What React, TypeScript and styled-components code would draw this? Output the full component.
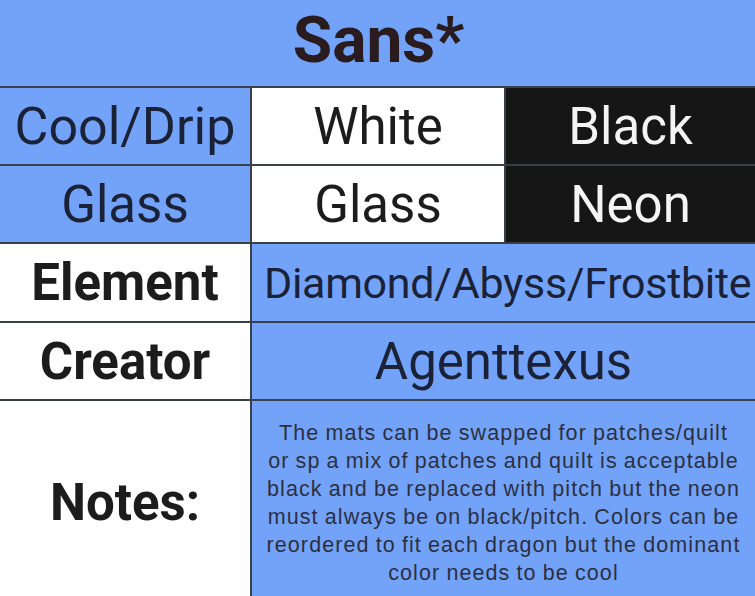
import React from 'react';
import styled, { createGlobalStyle } from 'styled-components';

const GlobalStyle = createGlobalStyle`
  html, body {
    margin: 0;
    padding: 0;
    background: #72a3f8;
  }
  body {
    font-family: Roboto, "Liberation Sans", Arial, sans-serif;
  }
`;

const BLUE = '#72a3f8';
const LINE = '#3b3f4a';

const Sheet = styled.div`
  width: 755px;
  height: 596px;
  display: flex;
  flex-direction: column;
  background: ${BLUE};
  overflow: hidden;
`;

const Title = styled.div`
  height: 80px;
  flex-shrink: 0;
  display: flex;
  align-items: center;
  justify-content: center;
  padding: 0 0 6px 2px;
  font-size: 64px;
  font-weight: 700;
  color: #2a1b1e;
  border-bottom: 2px solid ${LINE};
`;

const Row = styled.div<{ $cols: string; $height: number }>`
  display: grid;
  grid-template-columns: ${p => p.$cols};
  height: ${p => p.$height}px;
  border-bottom: 2px solid ${LINE};
  flex-shrink: 0;

  &:last-child {
    border-bottom: none;
    flex: 1;
  }
`;

type Tone = 'blue' | 'white' | 'black';

const toneBg: Record<Tone, string> = {
  blue: BLUE,
  white: '#ffffff',
  black: '#161616',
};

const toneFg: Record<Tone, string> = {
  blue: '#1b2136',
  white: '#1c1c1c',
  black: '#f4f4f4',
};

const Cell = styled.div<{ $tone: Tone; $bold?: boolean; $size?: number }>`
  display: flex;
  align-items: center;
  justify-content: center;
  background: ${p => toneBg[p.$tone]};
  color: ${p => toneFg[p.$tone]};
  font-size: ${p => p.$size ?? 51}px;
  font-weight: ${p => (p.$bold ? 700 : 400)};
  border-right: 2px solid ${LINE};
  white-space: nowrap;
  overflow: hidden;

  &:last-child {
    border-right: none;
  }
`;

const WideCell = styled(Cell)`
  justify-content: flex-start;
  padding-left: 12px;
  letter-spacing: -0.3px;
`;

const NotesCell = styled(Cell)`
  align-items: flex-start;
  white-space: normal;
`;

const NotesText = styled.p`
  margin: 0;
  padding: 18px 0 20px;
  font-family: "Liberation Sans", Arial, sans-serif;
  font-size: 21.5px;
  line-height: 28px;
  color: #2d2f40;
  text-align: center;
  white-space: nowrap;
  letter-spacing: 1.1px;
  word-spacing: -1px;
`;

const notes = [
  'The mats can be swapped for patches/quilt',
  'or sp a mix of patches and quilt is acceptable',
  'black and be replaced with pitch but the neon',
  'must always be on black/pitch. Colors can be',
  'reordered to fit each dragon but the dominant',
  'color needs to be cool',
];

const App: React.FC = () => {
  return (
    <>
      <GlobalStyle />
      <Sheet>
        <Title>Sans*</Title>

        <Row $cols="252px 254px 1fr" $height={76}>
          <Cell $tone="blue" $size={52}>Cool/Drip</Cell>
          <Cell $tone="white">White</Cell>
          <Cell $tone="black">Black</Cell>
        </Row>
        <Row $cols="252px 254px 1fr" $height={76}>
          <Cell $tone="blue">Glass</Cell>
          <Cell $tone="white">Glass</Cell>
          <Cell $tone="black">Neon</Cell>
        </Row>

        <Row $cols="252px 1fr" $height={77}>
          <Cell $tone="white" $bold>Element</Cell>
          <WideCell $tone="blue" $size={43}>Diamond/Abyss/Frostbite</WideCell>
        </Row>
        <Row $cols="252px 1fr" $height={76}>
          <Cell $tone="white" $bold>Creator</Cell>
          <Cell $tone="blue">Agenttexus</Cell>
        </Row>
        <Row $cols="252px 1fr" $height={203}>
          <Cell $tone="white" $bold>Notes:</Cell>
          <NotesCell $tone="blue">
            <NotesText>
              {notes.map((line, i) => (
                <React.Fragment key={i}>
                  {line}
                  {i < notes.length - 1 && <br />}
                </React.Fragment>
              ))}
            </NotesText>
          </NotesCell>
        </Row>
      </Sheet>
    </>
  );
};

export default App;
